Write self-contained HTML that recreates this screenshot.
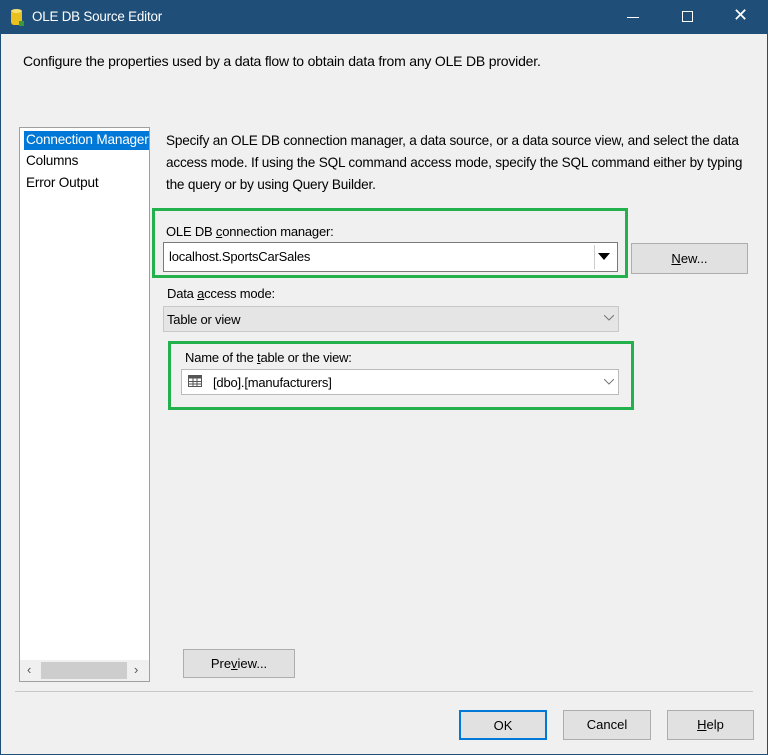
<!DOCTYPE html>
<html><head><style>
*{box-sizing:border-box;margin:0;padding:0}
body{width:768px;height:755px;overflow:hidden;font-family:"Liberation Sans",sans-serif;font-size:13px;color:#000;background:#1f4e79}
.win{position:absolute;left:1px;top:34px;width:766px;height:720px;background:#f0f0f0}
.t{position:absolute;white-space:nowrap;letter-spacing:-0.2px}
.box{position:absolute}
.btn{position:absolute;background:#e1e1e1;border:1px solid #adadad;text-align:center;font-size:13px}
.g{position:absolute;border:3px solid #22b14c}
u{text-decoration:underline}
</style></head><body>
<div class="box" style="left:0;top:0;width:768px;height:34px;background:#1f4e79"></div>
<svg class="box" style="left:10px;top:8px" width="16" height="20"><rect x="1" y="2" width="11" height="15" rx="3" fill="#e8c020"/><ellipse cx="6.5" cy="3" rx="5.5" ry="2" fill="#f8e070"/><rect x="9" y="13" width="5" height="5" fill="#3a9a3a"/></svg>
<div class="t" style="left:32px;top:9px;color:#fff;font-size:13.4px">OLE DB Source Editor</div>
<div class="box" style="left:627px;top:17px;width:12px;height:1px;background:#fff"></div>
<div class="box" style="left:682px;top:11px;width:11px;height:11px;border:1px solid #fff"></div>
<div class="t" style="left:733px;top:5px;color:#fff;font-size:18px">✕</div>
<div class="win"></div>
<div class="t" style="left:23px;top:53px;font-size:14px">Configure the properties used by a data flow to obtain data from any OLE DB provider.</div>

<div class="box" style="left:19px;top:127px;width:131px;height:555px;background:#fff;border:1px solid #a0a0a0;overflow:hidden">
<div class="box" style="left:4px;top:3px;width:126px;height:19px;background:#0078d7"></div>
<div class="t" style="left:6px;top:4px;color:#fff;font-size:13.6px">Connection Manager</div>
<div class="t" style="left:6px;top:25px;font-size:13.6px">Columns</div>
<div class="t" style="left:6px;top:47px;font-size:13.6px">Error Output</div>
<div class="box" style="left:0;top:532px;width:129px;height:21px;background:#f0f0f0"></div>
<div class="box" style="left:21px;top:534px;width:86px;height:17px;background:#cdcdcd"></div>
<div class="t" style="left:7px;top:534px;color:#555">‹</div>
<div class="t" style="left:114px;top:534px;color:#555">›</div>
</div>

<div class="t" style="left:166px;top:130px;line-height:22px;font-size:13.6px">Specify an OLE DB connection manager, a data source, or a data source view, and select the data<br>access mode. If using the SQL command access mode, specify the SQL command either by typing<br>the query or by using Query Builder.</div>

<div class="g" style="left:152px;top:208px;width:476px;height:70px"></div>
<div class="t" style="left:166px;top:224px">OLE DB <u>c</u>onnection manager:</div>
<div class="box" style="left:163px;top:242px;width:455px;height:30px;background:#fff;border:1px solid #7a7a7a"></div>
<div class="t" style="left:169px;top:249px">localhost.SportsCarSales</div>
<div class="box" style="left:594px;top:245px;width:20px;height:24px;border-left:1px solid #ccc"></div>
<svg class="box" style="left:598px;top:253px" width="12" height="8"><path d="M0 0H12L6 7Z" fill="#000"/></svg>
<div class="btn" style="left:631px;top:243px;width:117px;height:31px;line-height:29px"><u>N</u>ew...</div>

<div class="t" style="left:167px;top:286px">Data <u>a</u>ccess mode:</div>
<div class="box" style="left:163px;top:306px;width:456px;height:26px;background:#e5e5e5;border:1px solid #c8c8c8"></div>
<div class="t" style="left:167px;top:312px">Table or view</div>
<svg class="box" style="left:604px;top:315px" width="10" height="6"><path d="M0 0L5 5L10 0" fill="none" stroke="#777"/></svg>

<div class="g" style="left:168px;top:341px;width:466px;height:69px"></div>
<div class="t" style="left:185px;top:350px">Name of the <u>t</u>able or the view:</div>
<div class="box" style="left:181px;top:369px;width:438px;height:26px;background:#fff;border:1px solid #bbb"></div>
<svg class="box" style="left:188px;top:375px" width="14" height="12"><rect x="0.5" y="0.5" width="13" height="11" fill="#fff" stroke="#555"/><rect x="0.5" y="0.5" width="13" height="3" fill="#555"/><path d="M5 0V12M9 0V12M0 6.5H14M0 9H14" stroke="#555"/></svg>
<div class="t" style="left:213px;top:375px">[dbo].[manufacturers]</div>
<svg class="box" style="left:604px;top:379px" width="10" height="6"><path d="M0 0L5 5L10 0" fill="none" stroke="#777"/></svg>

<div class="btn" style="left:183px;top:649px;width:112px;height:29px;line-height:27px">Pre<u>v</u>iew...</div>
<div class="box" style="left:15px;top:691px;width:738px;height:1px;background:#c8c8c8"></div>
<div class="btn" style="left:459px;top:710px;width:88px;height:30px;line-height:28px;border:2px solid #0078d7">OK</div>
<div class="btn" style="left:563px;top:710px;width:88px;height:30px;line-height:28px">Cancel</div>
<div class="btn" style="left:667px;top:710px;width:87px;height:30px;line-height:28px"><u>H</u>elp</div>
</body></html>
